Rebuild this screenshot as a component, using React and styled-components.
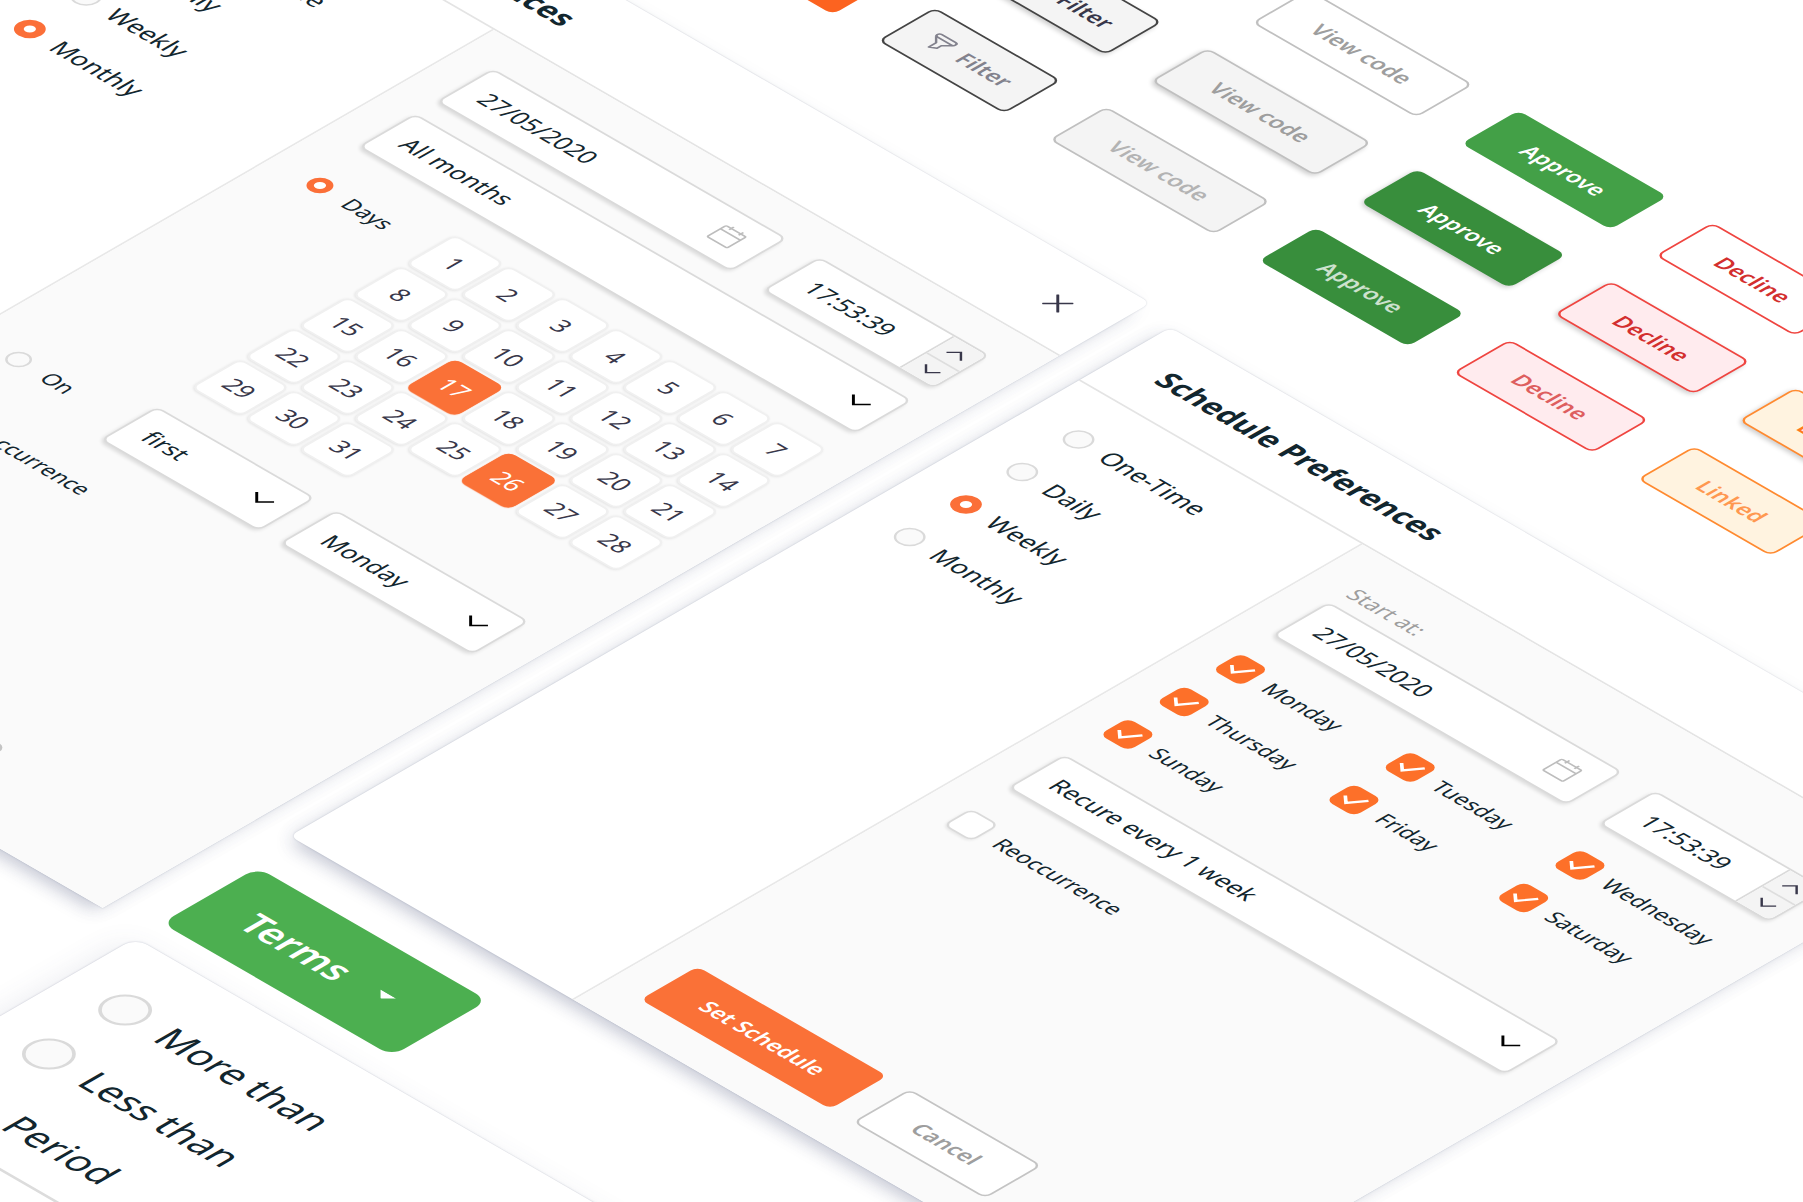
import React, { useState } from "react";
import styled, { createGlobalStyle, css } from "styled-components";

const GlobalStyle = createGlobalStyle`
  * {
    box-sizing: border-box;
  }

  body {
    margin: 0;
    background: #fff;
    overflow: hidden;
  }

  body, button, input, select {
    font-family: "Noto Sans", "Open Sans", sans-serif;
    color: #12262e;
  }
`;

const Stage = styled.main`
  position: relative;
  width: 100%;
  height: 100vh;
  overflow: hidden;
`;

// isometric plane: x runs down-right, y runs down-left
const Plane = styled.div`
  position: absolute;
  left: 0;
  top: 0;
  width: 2400px;
  height: 2400px;
  transform-origin: 0 0;
  transform: translate(953px, -550px) matrix(0.866, 0.5, -0.866, 0.5, 0, 0);
`;

const Spot = styled.div`
  position: absolute;
  left: ${(props) => props.$x}px;
  top: ${(props) => props.$y}px;
`;

const Modal = styled.section`
  display: flex;
  flex-direction: column;
  width: 980px;
  height: ${(props) => props.$height}px;
  background: #fff;
  border-radius: ${(props) => (props.$square ? "8px 8px 0 8px" : "8px")};
  box-shadow: 0 0 2px rgba(80, 90, 120, 0.28), 0 12px 18px -6px rgba(60, 70, 110, 0.28),
    0 6px 20px rgba(70, 80, 120, 0.06);
  overflow: hidden;
`;

const ModalHeader = styled.header`
  display: flex;
  align-items: center;
  justify-content: space-between;
  height: 106px;
  padding: 3px 43px 0 44px;
  border-bottom: 2px solid #e4e4e4;
`;

const ModalTitle = styled.h2`
  margin: 0;
  font-size: 30px;
  font-weight: 700;
  line-height: 40px;
`;

const CloseButton = styled.button`
  display: flex;
  padding: 0;
  border: 0;
  background: none;
`;

const ModalBody = styled.div`
  display: flex;
  flex: 1;
`;

const Sidebar = styled.div`
  display: flex;
  flex-direction: column;
  gap: 39px;
  width: 328px;
  padding: ${(props) => props.$top}px 46px 0;
  border-right: 2px solid #e8e8e8;
`;

const Content = styled.div`
  display: flex;
  flex-direction: column;
  flex: 1;
  padding: 39px 40px 39px 38px;
  background: #fafafa;
`;

const Option = styled.label`
  display: flex;
  align-items: center;
  gap: ${(props) => props.$gap || 17}px;
  height: ${(props) => props.$height || 26}px;
  padding-left: ${(props) => props.$indent || 0}px;
  font-size: ${(props) => props.$font || 25}px;
  white-space: nowrap;
`;

const Radio = styled.input`
  flex: none;
  width: ${(props) => props.$size || 26}px;
  height: ${(props) => props.$size || 26}px;
  margin: 0;
  appearance: none;
  border: ${(props) => (props.$size > 40 ? 3 : 2)}px solid #dadada;
  border-radius: 50%;
  background: #fafafa;

  &:checked {
    border: ${(props) => (props.$size || 26) / 2 - 5}px solid #fb6f38;
    background: #fff;
  }
`;

const Field = styled.div`
  display: grid;
  align-items: center;
  flex: none;
  width: ${(props) => (props.$width ? props.$width + "px" : "auto")};
  height: 66px;
  margin-top: ${(props) => props.$top || 0}px;
  border: 2px solid #dadada;
  border-radius: 8px;
  background: #fff;
  box-shadow: 0 3px 4px rgba(0, 0, 0, 0.12);
  overflow: hidden;

  > * {
    grid-area: 1 / 1;
  }

  > svg {
    justify-self: end;
    margin-right: ${(props) => props.$inset || 16}px;
    pointer-events: none;
  }
`;

const inputText = css`
  width: 100%;
  height: 62px;
  padding: 0 20px;
  border: 0;
  background: none;
  font-size: 24px;
  outline: none;
`;

const TextInput = styled.input`
  ${inputText}
`;

const Select = styled.select`
  ${inputText}
  appearance: none;
`;

const Row = styled.div`
  display: flex;
  justify-content: space-between;
  margin-top: ${(props) => props.$top || 0}px;
`;

const Spinner = styled.div`
  justify-self: end;
  display: grid;
  grid-template-rows: 1fr 1fr;
  width: 39px;
  height: 62px;
  border-left: 2px solid #dadada;
`;

const Step = styled.button`
  display: flex;
  align-items: center;
  justify-content: center;
  padding: 0;
  border: 0;
  background: #f4f4f4;

  & + & {
    border-top: 2px solid #dedede;
  }
`;

const StartLabel = styled.label`
  height: 28px;
  margin-bottom: 10px;
  padding-left: 3px;
  color: #9e9e9e;
  font-size: 22px;
  line-height: 28px;
`;

const Calendar = styled.div`
  display: grid;
  grid-template-columns: repeat(7, 58px);
  grid-auto-rows: 58px;
  gap: 4px;
`;

const Day = styled.button`
  padding: 0;
  border: 2px solid ${(props) => (props.$active ? "#fa7137" : "#f0f0f0")};
  border-radius: 8px;
  background: ${(props) => (props.$active ? "#fa7137" : "#fff")};
  color: ${(props) => (props.$active ? "#fff" : "#38374a")};
  font-size: 24px;
  box-shadow: 0 1px ${(props) => (props.$active ? "1px #fa7137" : "3px rgba(0, 0, 0, 0.1)")};
`;

const Pair = styled.div`
  display: flex;
  gap: 24px;
`;

const DayChecks = styled.div`
  display: grid;
  grid-template-columns: 196px 196px 1fr;
  row-gap: 32px;
  margin: 36px 0 40px;
`;

const Check = styled.label`
  display: flex;
  align-items: center;
  gap: 15px;
  height: 33px;
  margin-top: ${(props) => props.$top || 0}px;
  font-size: 22px;
  white-space: nowrap;
`;

const CheckBox = styled.span`
  display: grid;
  flex: none;

  > * {
    grid-area: 1 / 1;
  }

  > svg {
    pointer-events: none;
  }

  > input {
    width: 33px;
    height: 33px;
    margin: 0;
    appearance: none;
    border: 2px solid #dadada;
    border-radius: 8px;
    background: #fff;
    box-shadow: 0 2px 3px rgba(0, 0, 0, 0.08);
  }

  > input:checked {
    border: 0;
    background: #fd7029;
    box-shadow: none;
  }
`;

const Footer = styled.footer`
  display: flex;
  gap: 26px;
  margin-top: auto;
`;

const Button = styled.button`
  display: flex;
  align-items: center;
  justify-content: center;
  gap: 12px;
  height: 66px;
  padding: 0 ${(props) => props.$pad || 39}px;
  border: 2px solid ${(props) => props.$border || props.$bg};
  border-radius: 8px;
  background: ${(props) => props.$bg};
  color: ${(props) => props.$color};
  font-size: 22px;
  font-weight: 600;
  white-space: nowrap;
  box-shadow: ${(props) => (props.$raised ? "0 3px 5px rgba(0, 0, 0, 0.2)" : "none")};

  > * {
    opacity: ${(props) => props.$fade || 1};
  }
`;

const ButtonGrid = styled.div`
  display: grid;
  grid-template-columns: 172px 146px 190px 172px 161px 154px;
  grid-template-rows: repeat(3, 66px);
  grid-auto-flow: column;
  gap: 51px 52px;
`;

const TermsButton = styled.button`
  display: flex;
  align-items: center;
  justify-content: space-between;
  width: 266px;
  height: 111px;
  padding: 0 55px 0 46px;
  border: 0;
  border-radius: 14px;
  background: #4caf50;
  color: #fff;
  font-size: 38px;
  font-weight: 600;
`;

const Popover = styled.div`
  display: flex;
  flex-direction: column;
  gap: 44px;
  width: 720px;
  height: 640px;
  padding: 56px 44px 0;
  border-radius: 14px;
  background: #fff;
  box-shadow: 0 0 2px rgba(80, 90, 120, 0.35), 0 12px 30px rgba(70, 80, 120, 0.12);
`;

const Divider = styled.hr`
  width: 100%;
  height: 3px;
  margin: -12px 0 0;
  border: 0;
  background: #dcdcdc;
`;

const Chevron = ({ width = 20, color = "#000", up }) => (
  <svg width={width} height={width / 2 + 4} viewBox="-12 -2 24 14" fill="none" stroke={color} strokeWidth="2.4">
    <path d={up ? "M-10 10L0 0L10 10" : "M-10 0L0 10L10 0"} />
  </svg>
);

const CalendarIcon = () => (
  <svg width="28" height="28" viewBox="0 0 28 28" fill="none" stroke="#bdbdbd" strokeWidth="1.8">
    <rect x="2.5" y="3.5" width="23" height="22" rx="1.5" />
    <path d="M2.5 10H25.5M8.5 0.5V6M19.5 0.5V6" />
  </svg>
);

const FilterIcon = () => (
  <svg width="24" height="24" viewBox="0 0 24 24" fill="none" stroke="currentColor" strokeWidth="2" strokeLinejoin="round">
    <rect x="1.5" y="2" width="21" height="5" rx="2.5" />
    <path d="M2.5 7L9 13.5V22L15 18.5V13.5L21.5 7" />
  </svg>
);

const CloseIcon = () => (
  <svg width="20" height="20" viewBox="0 0 20 20" stroke="#38374a" strokeWidth="2.4">
    <path d="M1 1L19 19M19 1L1 19" />
  </svg>
);

const CheckMark = () => (
  <svg width="33" height="33" viewBox="0 0 33 33" fill="none" stroke="#fff" strokeWidth="3">
    <path d="M7 17L14.8 24L25.8 9" />
  </svg>
);

const SelectField = ({ label, value, width, top }) => (
  <Field $width={width} $top={top}>
    <Select aria-label={label} defaultValue={value}>
      <option>{value}</option>
    </Select>
    <Chevron width={24} />
  </Field>
);

const CheckOption = ({ label, checked, top }) => {
  const [on, setOn] = useState(Boolean(checked));

  return (
    <Check $top={top}>
      <CheckBox>
        <input type="checkbox" checked={on} onChange={() => setOn(!on)} />
        {on && <CheckMark />}
      </CheckBox>
      {label}
    </Check>
  );
};

const StartFields = ({ id }) => (
  <Row>
    <Field $width={340} $inset={21}>
      <TextInput id={id} aria-label="Start date" defaultValue="27/05/2020" />
      <CalendarIcon />
    </Field>
    <Field $width={197}>
      <TextInput aria-label="Start time" defaultValue="17:53:39" />
      <Spinner>
        <Step aria-label="Later">
          <Chevron width={20} color="#38374a" up />
        </Step>
        <Step aria-label="Earlier">
          <Chevron width={20} color="#38374a" />
        </Step>
      </Spinner>
    </Field>
  </Row>
);

const periods = ["One-Time", "Daily", "Weekly", "Monthly"];

const ScheduleModal = ({ name, period, height, sideTop, square, children }) => (
  <Modal $height={height} $square={square}>
    <ModalHeader>
      <ModalTitle>Schedule Preferences</ModalTitle>
      <CloseButton aria-label="Close">
        <CloseIcon />
      </CloseButton>
    </ModalHeader>
    <ModalBody>
      <Sidebar $top={sideTop}>
        {periods.map((item) => (
          <Option key={item}>
            <Radio type="radio" name={name} defaultChecked={item === period} />
            {item}
          </Option>
        ))}
      </Sidebar>
      <Content>
        {children}
        <Footer>
          <Button $bg="#fa7137" $color="#fff">
            Set Schedule
          </Button>
          <Button $bg="#fff" $border="#c4c4c4" $color="#9e9e9e">
            Cancel
          </Button>
        </Footer>
      </Content>
    </ModalBody>
  </Modal>
);

const monthDays = Array.from({ length: 31 }, (_, i) => i + 1);

const weekDays = ["Monday", "Tuesday", "Wednesday", "Thursday", "Friday", "Saturday", "Sunday"];

// every label is drawn in three states: normal, hover, pressed
const buttons = [
  { label: "Apply", color: "#fff", bg: ["#fa7137", "#fc6320", "#fc6320"] },
  { label: "Filter", color: "#38374a", border: "#444", bg: ["#fff", "#f4f4f4", "#f4f4f4"], icon: true, fade: 0.6 },
  { label: "View code", color: "#9e9e9e", border: "#c0c0c0", bg: ["#fff", "#f4f4f4", "#f4f4f4"] },
  { label: "Approve", color: "#fff", bg: ["#43a047", "#388e3c", "#388e3c"] },
  { label: "Decline", color: "#d32f2f", border: "#ef4540", bg: ["#fff", "#ffebee", "#ffebee"] },
  { label: "Linked", color: "#ff7a1f", border: "#ff8a30", bg: ["#fff", "#fff3e0", "#fff3e0"] },
];

function App() {
  return (
    <Stage>
      <GlobalStyle />
      <Plane>
        <Spot $x={323} $y={334}>
          <ButtonGrid>
            {buttons.map((item) =>
              item.bg.map((bg, state) => (
                <Button
                  key={item.label + state}
                  $bg={bg}
                  $border={item.border}
                  $color={item.color}
                  $pad={20}
                  $raised={state === 1}
                  $fade={state === 2 ? item.fade || 0.75 : 1}
                >
                  {item.icon && <FilterIcon />}
                  <span>{item.label}</span>
                </Button>
              ))
            )}
          </ButtonGrid>
        </Spot>

        <Spot $x={-13} $y={739}>
          <ScheduleModal name="monthly" period="Monthly" height={1210} sideTop={59} square>
            <StartFields />
            <SelectField label="Months" value="All months" top={24} />
            <Row $top={32}>
              <Option $height={58} $font={22} $gap={20} $indent={6}>
                <Radio type="radio" name="repeat" $size={22} defaultChecked />
                Days
              </Option>
              <Calendar>
                {monthDays.map((day) => (
                  <Day key={day} $active={day === 17 || day === 26}>
                    {day}
                  </Day>
                ))}
              </Calendar>
            </Row>
            <Row $top={38}>
              <Option $height={66} $font={22} $gap={20} $indent={6}>
                <Radio type="radio" name="repeat" $size={22} />
                On
              </Option>
              <Pair>
                <SelectField label="Week" value="first" width={183} />
                <SelectField label="Week day" value="Monday" width={223} />
              </Pair>
            </Row>
            <CheckOption label="Reoccurrence" top={42} />
          </ScheduleModal>
        </Spot>

        <Spot $x={1003} $y={752}>
          <ScheduleModal name="weekly" period="Weekly" height={1017} sideTop={46}>
            <StartLabel htmlFor="start-at">Start at:</StartLabel>
            <StartFields id="start-at" />
            <DayChecks>
              {weekDays.map((day) => (
                <CheckOption key={day} label={day} checked />
              ))}
            </DayChecks>
            <SelectField label="Recurrence" value="Recure every 1 week" />
            <CheckOption label="Reoccurrence" top={42} />
          </ScheduleModal>
        </Spot>

        <Spot $x={1016} $y={1819}>
          <TermsButton>
            Terms
            <svg width="18" height="9" viewBox="0 0 18 9" fill="#fff">
              <path d="M0 0H18L9 9Z" />
            </svg>
          </TermsButton>
        </Spot>

        <Spot $x={1016} $y={1960}>
          <Popover>
            {["More than", "Less than", "Period"].map((item) => (
              <Option key={item} $height={44} $font={38} $gap={23}>
                <Radio type="radio" name="terms" $size={44} defaultChecked={item === "Period"} />
                {item}
              </Option>
            ))}
            <Divider />
          </Popover>
        </Spot>
      </Plane>
    </Stage>
  );
}

export default App;
